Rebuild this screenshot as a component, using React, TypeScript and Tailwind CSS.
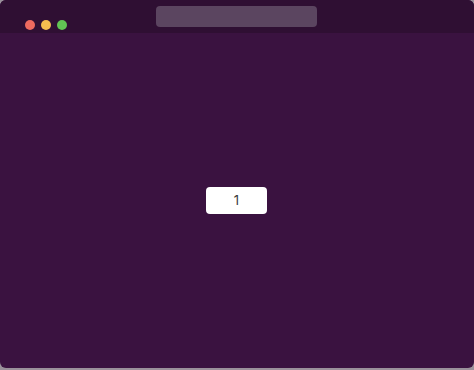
export default function App() {
  return (
    <div className="w-[474px] h-[370px] bg-[#9a919b] overflow-hidden">
      <div className="w-[474px] h-[368px] rounded-[6px] overflow-hidden flex flex-col bg-[#3a1240]">
        <div className="h-[33px] bg-[#2f0f33] grid grid-cols-[156px_161px_1fr] shrink-0">
          <div className="flex items-start gap-[6px] pl-[25px] pt-[20px]">
            <span className="w-[10px] h-[10px] rounded-full bg-[#ee6a5f]" />
            <span className="w-[10px] h-[10px] rounded-full bg-[#f5bd4f]" />
            <span className="w-[10px] h-[10px] rounded-full bg-[#61c454]" />
          </div>
          <div className="mt-[6px] h-[21px] rounded-[4px] bg-[#5b4560]" />
          <div />
        </div>
        <div className="flex-1 flex items-center justify-center pr-[1px]">
          <button className="w-[61px] h-[27px] rounded-[4px] bg-white text-[#3a3a3a] text-[13px] font-['Inter',sans-serif]">
            1
          </button>
        </div>
      </div>
    </div>
  );
}
